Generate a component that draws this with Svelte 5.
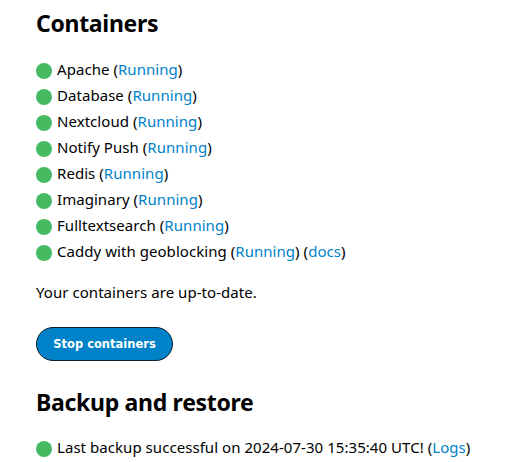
<script lang="ts">
  const containers = [
    { name: 'Apache' },
    { name: 'Database' },
    { name: 'Nextcloud' },
    { name: 'Notify Push' },
    { name: 'Redis' },
    { name: 'Imaginary' },
    { name: 'Fulltextsearch' },
    { name: 'Caddy with geoblocking', docs: true }
  ];
</script>

<main class="page">
  <h2>Containers</h2>
  <ul class="status-list">
    {#each containers as c}
      <li>
        <span class="dot"></span>
        <span class="label">{c.name} (<a href="#logs">Running</a>){#if c.docs}&nbsp;(<a href="#docs">docs</a>){/if}</span>
      </li>
    {/each}
  </ul>
  <p class="note">Your containers are up-to-date.</p>
  <button class="stop" type="button">Stop containers</button>
  <h2 class="second">Backup and restore</h2>
  <ul class="status-list">
    <li>
      <span class="dot"></span>
      <span class="label">Last backup successful on 2024-07-30 15:35:40 UTC! (<a href="#logs">Logs</a>)</span>
    </li>
  </ul>
</main>

<style>
  :global(body) {
    margin: 0;
    background: #fff;
    overflow: hidden;
  }
  .page {
    padding: 5px 36px 0;
    color: #000;
    font-family: "Noto Sans", "Open Sans", sans-serif;
    font-size: 15px;
    letter-spacing: 0.05px;
  }
  h2 {
    margin: 0 0 16px;
    font-size: 23px;
    line-height: 36px;
    font-weight: 700;
    letter-spacing: -0.3px;
  }
  .second {
    margin: 0 0 15px;
  }
  .status-list {
    margin: 0;
    padding: 0;
    list-style: none;
  }
  .status-list li {
    display: flex;
    align-items: center;
    gap: 5px;
    height: 26px;
    white-space: nowrap;
  }
  .label {
    margin-bottom: 2px;
  }
  .dot {
    flex: none;
    width: 16px;
    height: 16px;
    margin-top: 2px;
    border-radius: 50%;
    background: #46ba61;
  }
  a {
    color: #0082c9;
    text-decoration: none;
  }
  .note {
    margin: 14px 0 22px;
    line-height: 26px;
  }
  .stop {
    display: block;
    width: 137px;
    height: 34px;
    margin: 0 0 23px;
    padding: 0;
    border: 1px solid #0f1c2b;
    border-radius: 17px;
    background: #0082c9;
    color: #fff;
    font-family: "DejaVu Sans", sans-serif;
    font-size: 11.5px;
    font-weight: 700;
    letter-spacing: 0;
  }
</style>
